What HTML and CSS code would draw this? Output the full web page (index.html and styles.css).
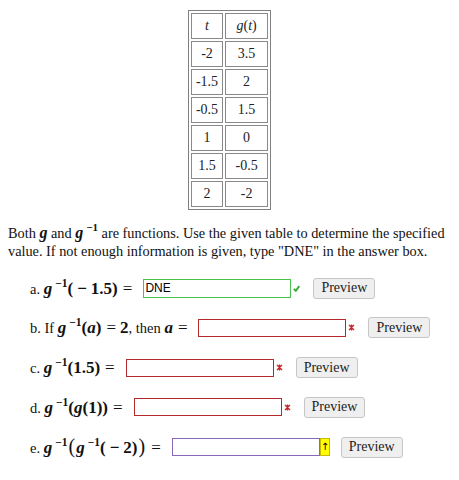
FILE: index.html
```html
<!DOCTYPE html>
<html>
<head>
<meta charset="utf-8">
<link rel="stylesheet" href="styles.css">
</head>
<body>
<table class="tbl">
  <tr><td class="c1"><i>t</i></td><td class="c2"><i>g</i>(<i>t</i>)</td></tr>
  <tr><td class="c1">-2</td><td class="c2">3.5</td></tr>
  <tr><td class="c1">-1.5</td><td class="c2">2</td></tr>
  <tr><td class="c1">-0.5</td><td class="c2">1.5</td></tr>
  <tr><td class="c1">1</td><td class="c2">0</td></tr>
  <tr><td class="c1">1.5</td><td class="c2">-0.5</td></tr>
  <tr><td class="c1">2</td><td class="c2">-2</td></tr>
</table>

<p class="intro">Both <span class="m"><i>g</i></span> and <span class="m"><i>g</i><sup class="sup">−1</sup></span> are functions. Use the given table to determine the specified value. If not enough information is given, type "DNE" in the answer box.</p>

<div class="items">
  <div class="item">
    <span class="lbl">a. <span class="m"><i>g</i><sup class="sup">−1</sup>(<span class="op">−</span>1.5)<span class="eq">=</span></span></span>
    <input class="ans ok" type="text" value="DNE">
    <span class="mark"><svg width="7" height="7" viewBox="0 0 7 7"><path d="M0.8 3.8 L2.8 5.8 L6.3 1.2" fill="none" stroke="#3a3" stroke-width="1.9"/></svg></span>
    <button class="prev">Preview</button>
  </div>
  <div class="item">
    <span class="lbl">b. If <span class="m"><i>g</i><sup class="sup">−1</sup>(<i>a</i>)<span class="eq">=</span>2</span>, then <span class="m"><i>a</i><span class="eq">=</span></span></span>
    <input class="ans bad" type="text" value="">
    <span class="mark"><svg width="7" height="7" viewBox="0 0 7 7"><path d="M1 1 L6 6 M6 1 L1 6 M3.5 0.5 L3.5 6.5" fill="none" stroke="#c22" stroke-width="1.4"/></svg></span>
    <button class="prev">Preview</button>
  </div>
  <div class="item">
    <span class="lbl">c. <span class="m"><i>g</i><sup class="sup">−1</sup>(1.5)<span class="eq">=</span></span></span>
    <input class="ans bad" type="text" value="">
    <span class="mark"><svg width="7" height="7" viewBox="0 0 7 7"><path d="M1 1 L6 6 M6 1 L1 6 M3.5 0.5 L3.5 6.5" fill="none" stroke="#c22" stroke-width="1.4"/></svg></span>
    <button class="prev">Preview</button>
  </div>
  <div class="item">
    <span class="lbl">d. <span class="m"><i>g</i><sup class="sup">−1</sup>(<i>g</i>(1))<span class="eq">=</span></span></span>
    <input class="ans bad" type="text" value="">
    <span class="mark"><svg width="7" height="7" viewBox="0 0 7 7"><path d="M1 1 L6 6 M6 1 L1 6 M3.5 0.5 L3.5 6.5" fill="none" stroke="#c22" stroke-width="1.4"/></svg></span>
    <button class="prev">Preview</button>
  </div>
  <div class="item">
    <span class="lbl">e. <span class="m"><i>g</i><sup class="sup">−1</sup><span class="big">(</span><i>g</i><sup class="sup">−1</sup>(<span class="op">−</span>2)<span class="big">)</span><span class="eq">=</span></span></span>
    <input class="ans cur" type="text" value="">
    <span class="arrow">↑</span>
    <button class="prev prev-e">Preview</button>
  </div>
</div>
</body>
</html>
```

FILE: styles.css
```css
body {
  margin: 8px;
  font-family: "Liberation Serif", "Times New Roman", serif;
  font-size: 14.3px;
  color: #111;
  background: #fff;
}

.tbl {
  margin: 2px auto 0;
  border: 1px solid #808080;
  border-spacing: 2px;
}

.tbl td {
  border: 1px solid #8a8a8a;
  padding: 4px;
  line-height: 16px;
  text-align: center;
  font-size: 14px;
  color: #222;
}

.tbl .c1 { width: 22px; }
.tbl .c2 { width: 33px; }

.intro {
  margin: 12px 0 0;
  line-height: 18px;
}

.m {
  font-family: "Liberation Serif", "Times New Roman", serif;
  font-size: 16px;
}

.m i {
  font-weight: bold;
}

.sup {
  font-size: 11px;
  font-weight: bold;
  vertical-align: 7px;
  line-height: 10px;
  margin-left: 3px;
}

.items {
  margin-top: 18px;
  padding-left: 22px;
}

.item {
  display: flex;
  align-items: center;
  height: 20px;
  margin-bottom: 19.75px;
  white-space: nowrap;
}

.lbl {
  font-size: 14.5px;
  line-height: 20px;
}

.lbl .m {
  font-size: 17px;
  font-weight: bold;
}

.lbl .sup {
  font-size: 11.5px;
}

.op {
  margin: 0 4px;
}

.eq {
  margin: 0 4px 0 5px;
  font-weight: normal;
}

.big {
  margin: 0 1px;
  font-size: 20px;
  font-weight: normal;
}

.ans {
  box-sizing: border-box;
  width: 148px;
  height: 19px;
  margin: 0 0 0 7px;
  padding: 0 1px;
  border: 1px solid #999;
  font-family: "Liberation Sans", Arial, sans-serif;
  font-size: 12px;
  color: #000;
  background: #fff;
  outline: none;
}

.ans.ok { border-color: #4bc34b; }
.ans.bad { border-color: #b22a2a; height: 18px; }
.ans.cur { border-color: #8866b8; height: 18px; }

.mark {
  display: flex;
  align-items: center;
  width: 7px;
  height: 7px;
  margin-left: 2px;
}

.arrow {
  box-sizing: border-box;
  width: 10px;
  height: 18px;
  background: #ffff00;
  border: 1px solid #c9b800;
  font-family: "DejaVu Sans", sans-serif;
  font-size: 10px;
  line-height: 16px;
  text-align: center;
  color: #000;
}

.prev {
  box-sizing: border-box;
  height: 21px;
  margin-left: 13px;
  padding: 0 7px;
  border: 1px solid #c6c6c6;
  border-radius: 3px;
  background: #efefef;
  font-family: "Liberation Serif", "Times New Roman", serif;
  font-size: 14px;
  color: #222;
}

.prev-e {
  margin-left: 11px;
}
```
